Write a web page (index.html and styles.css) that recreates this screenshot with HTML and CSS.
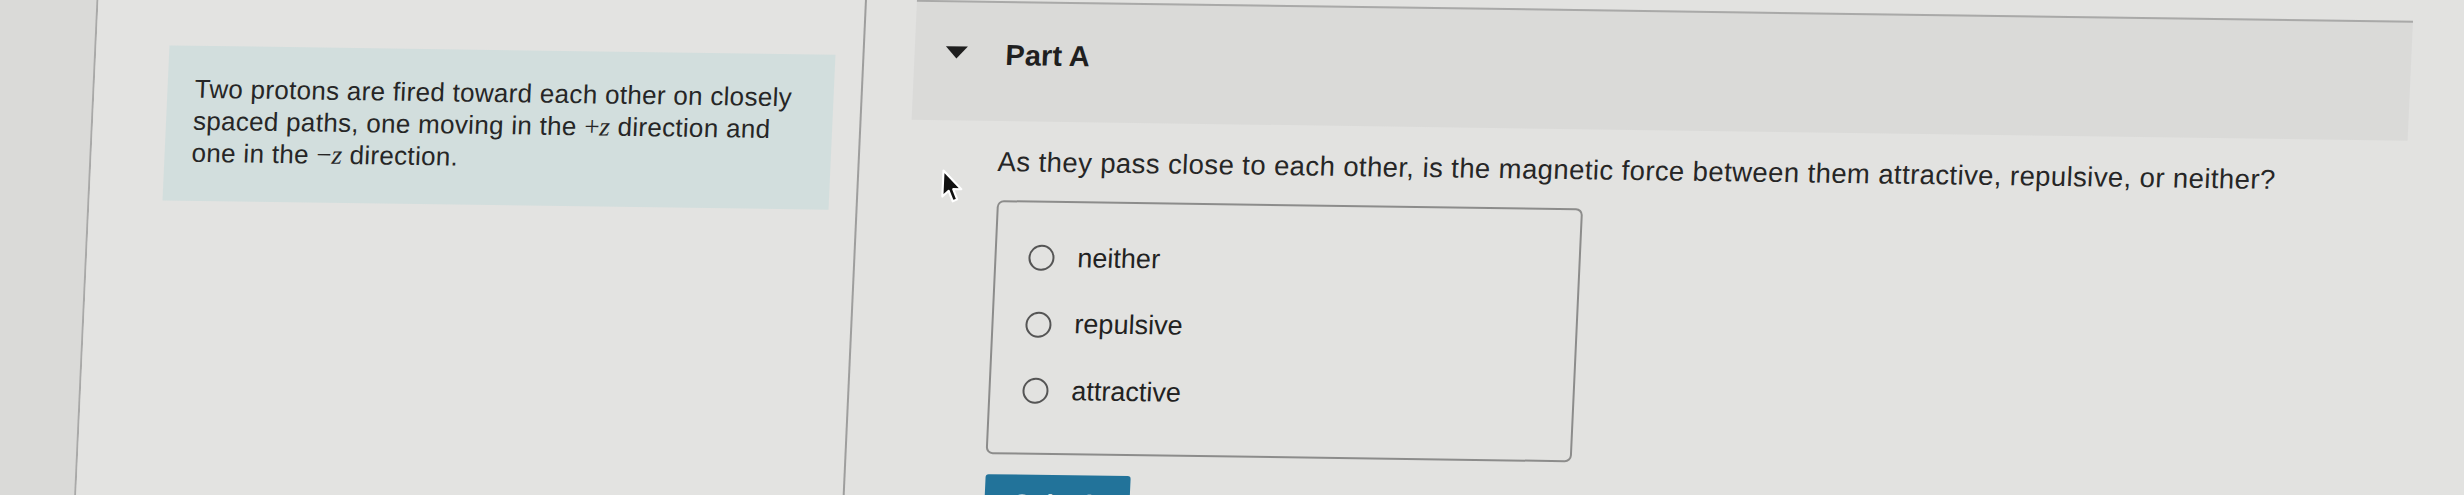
FILE: index.html
```html
<!DOCTYPE html>
<html lang="en">
<head>
<meta charset="utf-8">
<title>Part A</title>
<link rel="stylesheet" href="styles.css">
</head>
<body>
<div class="page">
  <div class="gutter"></div>
  <div class="intro">
    <div class="intro-box">
      <p>Two protons are fired toward each other on closely spaced paths, one moving in the <span class="math">+<i>z</i></span> direction and one in the <span class="math">&minus;<i>z</i></span> direction.</p>
    </div>
  </div>
  <div class="main">
    <div class="part-header">
      <span class="caret"></span>
      <span class="part-title">Part A</span>
    </div>
    <p class="question">As they pass close to each other, is the magnetic force between them attractive, repulsive, or neither?</p>
    <div class="answers">
      <label class="option"><span class="radio"></span><span class="label">neither</span></label>
      <label class="option"><span class="radio"></span><span class="label">repulsive</span></label>
      <label class="option"><span class="radio"></span><span class="label">attractive</span></label>
    </div>
    <div class="submit">Submit</div>
  </div>
  <svg class="cursor" width="26" height="37" viewBox="0 0 24 34" aria-hidden="true">
    <path d="M2 2 L2 26 L7.6 20.6 L11.8 30.2 L15.8 28.4 L11.7 19 L19.2 19 Z" fill="#111" stroke="#fff" stroke-width="2" stroke-linejoin="round"/>
  </svg>
</div>
</body>
</html>
```

FILE: styles.css
```css
html, body {
  margin: 0;
  padding: 0;
}
html {
  background: #e2e2e0;
}
body {
  width: 2464px;
  height: 495px;
  overflow: hidden;
  background: #e2e2e0;
  font-family: "Liberation Sans", Arial, sans-serif;
  color: #262626;
}
.page {
  position: relative;
  display: flex;
  width: 2500px;
  height: 560px;
  background: #e2e2e0;
  transform-origin: 0 0;
  transform: matrix(1, 0.014, -0.045, 1, 0, -13);
}
.gutter {
  width: 97px;
  flex: none;
  background: #dadad8;
  border-right: 2px solid #a9a9a8;
}
.intro {
  width: 768px;
  flex: none;
  box-sizing: border-box;
  padding: 56px 0 0 73px;
  border-right: 2px solid #9e9e9d;
  background: #e3e3e1;
}
.intro-box {
  width: 666px;
  height: 155px;
  box-sizing: border-box;
  background: #d2dedd;
  padding: 27px 24px 0 27px;
}
.intro-box p {
  margin: 0;
  font-size: 26px;
  line-height: 32px;
  letter-spacing: 0.3px;
}
.math {
  font-family: "Liberation Serif", "Times New Roman", serif;
  font-size: 27px;
  letter-spacing: 0;
}
.main {
  flex: 1;
  padding: 0 0 0 50px;
  display: flex;
  flex-direction: column;
  align-items: flex-start;
}
.part-header {
  width: 1496px;
  height: 120px;
  box-sizing: border-box;
  background: #dadad8;
  border-top: 2px solid #a9a9a8;
  display: flex;
  align-items: center;
  padding: 0 0 15px 31px;
}
.caret {
  width: 0;
  height: 0;
  border-left: 11px solid transparent;
  border-right: 11px solid transparent;
  border-top: 12px solid #1e1e1e;
  margin: -4px 38px 0 0;
}
.part-title {
  font-size: 29px;
  line-height: 34px;
  font-weight: bold;
  color: #1f1f1f;
}
.question {
  margin: 25px 0 0 88px;
  font-size: 27.5px;
  line-height: 32px;
  letter-spacing: 0.4px;
  color: #262626;
}
.answers {
  margin: 22px 0 0 89px;
  width: 586px;
  height: 254px;
  box-sizing: border-box;
  border: 2px solid #8c8c8b;
  border-radius: 7px;
  padding: 35px 0 0 32px;
  display: flex;
  flex-direction: column;
  gap: 26.5px;
}
.option {
  display: flex;
  align-items: center;
  height: 40px;
}
.radio {
  width: 26px;
  height: 26px;
  box-sizing: border-box;
  border: 2px solid #555;
  border-radius: 50%;
  margin-right: 23px;
  flex: none;
}
.label {
  font-size: 27px;
  color: #222;
}
.submit {
  margin: 20px 0 0 90px;
  width: 145px;
  height: 60px;
  background: #22739a;
  border-radius: 3px;
  color: #fff;
  font-size: 26px;
  font-weight: bold;
  text-align: center;
  padding-top: 14px;
  box-sizing: border-box;
}
.cursor {
  position: absolute;
  left: 949px;
  top: 168px;
}
```
